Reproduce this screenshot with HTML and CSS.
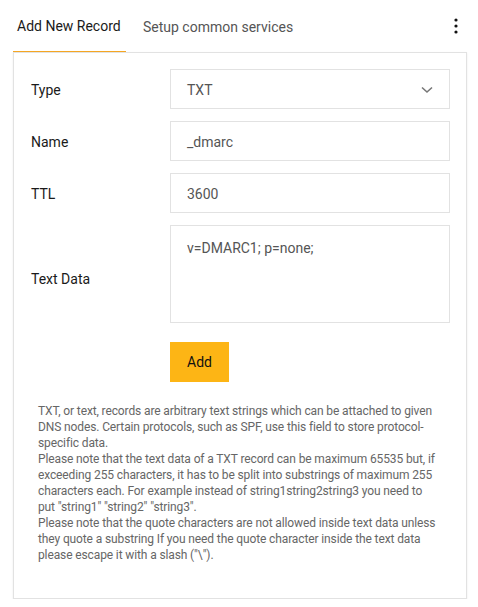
FILE: index.html
```html
<!DOCTYPE html>
<html lang="en">
<head>
<meta charset="utf-8">
<title>Add New Record</title>
<link rel="stylesheet" href="styles.css">
</head>
<body>
<div class="page">
  <div class="tabs">
    <div class="tab active">Add New Record</div>
    <div class="tab">Setup common services</div>
    <div class="spacer"></div>
    <button class="kebab" aria-label="More">
      <svg width="4" height="16" viewBox="0 0 4 16"><circle cx="2" cy="2" r="1.6" fill="#111"/><circle cx="2" cy="8" r="1.6" fill="#111"/><circle cx="2" cy="14" r="1.6" fill="#111"/></svg>
    </button>
  </div>
  <div class="card">
    <div class="row">
      <label class="label">Type</label>
      <div class="field select">
        <span>TXT</span>
        <svg class="chev" width="12" height="8" viewBox="0 0 12 8"><path d="M1 1.5 L6 6 L11 1.5" fill="none" stroke="#777" stroke-width="1.6"/></svg>
      </div>
    </div>
    <div class="row">
      <label class="label">Name</label>
      <div class="field">_dmarc</div>
    </div>
    <div class="row">
      <label class="label">TTL</label>
      <div class="field">3600</div>
    </div>
    <div class="row">
      <label class="label label-area">Text Data</label>
      <div class="field area">v=DMARC1; p=none;</div>
    </div>
    <div class="row actions">
      <div></div>
      <div><button class="add">Add</button></div>
    </div>
    <div class="help">TXT, or text, records are arbitrary text strings which can be attached to given DNS nodes. Certain protocols, such as SPF, use this field to store protocol-specific data.<br>Please note that the text data of a TXT record can be maximum 65535 but, if exceeding 255 characters, it has to be split into substrings of maximum 255 characters each. For example instead of string1string2string3 you need to put "string1" "string2" "string3".<br>Please note that the quote characters are not allowed inside text data unless they quote a substring If you need the quote character inside the text data please escape it with a slash ("\").</div>
  </div>
</div>
</body>
</html>
```
FILE: styles.css
```css
* { box-sizing: border-box; }
html, body { margin: 0; padding: 0; background: #fff; }
body { font-family: Roboto, "Liberation Sans", sans-serif; color: #222; }
.page { padding: 0 11px 0 13px; }
.tabs { display: flex; align-items: stretch; height: 52px; }
.tab { display: flex; align-items: center; padding: 1px 4px 0; font-size: 14px; color: #555; }
.tab.active { width: 113px; color: #1a1a1a; border-bottom: 1px solid #f5a623; margin-right: 13px; }
.spacer { flex: 1; }
.kebab { background: none; border: 0; padding: 0; width: 22px; display: flex; align-items: center; justify-content: center; margin-top: -1px; }
.card { border: 1px solid #e2e2e2; box-shadow: 0 1px 2px rgba(0,0,0,0.08); padding: 16px 0 35px; }
.row { display: grid; grid-template-columns: 139px 1fr; align-items: center; padding: 0 16px 0 17px; margin-bottom: 12px; }
.label { font-size: 14px; color: #1a1a1a; padding-top: 2px; }
.label-area { padding-top: 9px; }
.field { height: 40px; border: 1px solid #e2e2e2; display: flex; align-items: center; padding: 1px 16px 0; font-size: 14px; color: #555; }
.select { justify-content: space-between; }
.area { height: 98px; align-items: flex-start; padding-top: 14px; }
.actions { margin-top: 19px; margin-bottom: 0; }
.add { background: #fdb515; border: 0; width: 59px; height: 40px; font-family: inherit; font-size: 14px; color: #111; padding: 0; display: block; }
.help { margin-top: 21px; padding: 0 25.5px 0 24px; font-size: 12px; letter-spacing: -0.12px; line-height: 16px; color: #666; }
```
